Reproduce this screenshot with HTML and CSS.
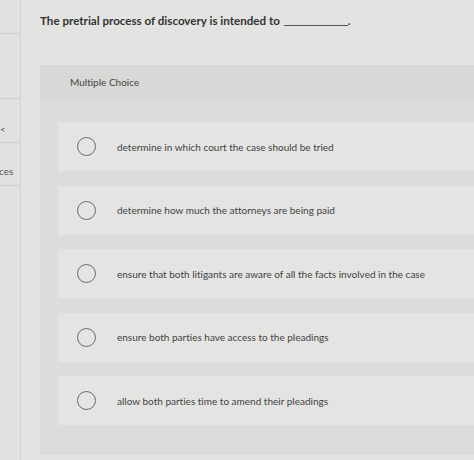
FILE: index.html
```html
<!DOCTYPE html>
<html>
<head>
<meta charset="utf-8">
<link rel="stylesheet" href="styles.css">
</head>
<body>
<div class="page">
  <aside class="sidebar">
    <div class="side-top"></div>
    <div class="side-box">
      <div class="side-item">&lt;</div>
      <div class="side-item">ces</div>
    </div>
  </aside>
  <main class="main">
    <h1 class="question">The pretrial process of discovery is intended to <span class="blank"></span>.</h1>
    <section class="panel">
      <div class="panel-head">Multiple Choice</div>
      <div class="options">
        <div class="option"><span class="radio"></span><span class="label">determine in which court the case should be tried</span></div>
        <div class="option"><span class="radio"></span><span class="label">determine how much the attorneys are being paid</span></div>
        <div class="option"><span class="radio"></span><span class="label">ensure that both litigants are aware of all the facts involved in the case</span></div>
        <div class="option"><span class="radio"></span><span class="label">ensure both parties have access to the pleadings</span></div>
        <div class="option"><span class="radio"></span><span class="label">allow both parties time to amend their pleadings</span></div>
      </div>
    </section>
  </main>
</div>
</body>
</html>
```
FILE: styles.css
```css
html, body {
  margin: 0;
  padding: 0;
}
body {
  background: #e3e3e1;
  font-family: Lato, "Liberation Sans", sans-serif;
  font-variant-ligatures: none;
  color: #3a3a3a;
  width: 474px;
  height: 460px;
  overflow: hidden;
}
.page {
  display: flex;
  height: 460px;
}
.sidebar {
  width: 20px;
  flex: none;
  display: flex;
  flex-direction: column;
  background: #e1e1df;
  border-right: 1px solid #d4d4d2;
}
.side-top {
  height: 33px;
  border-bottom: 1px solid #cfcfcd;
}
.side-box {
  margin-top: 64px;
  border-top: 1px solid #cfcfcd;
  border-bottom: 1px solid #cfcfcd;
  display: flex;
  flex-direction: column;
}
.side-item {
  font-size: 10px;
  color: #555;
  display: flex;
  align-items: center;
}
.side-item:first-child {
  padding-top: 16px;
  height: 27px;
  border-bottom: 1px solid #cfcfcd;
}
.side-item:last-child {
  margin-left: -1px;
  padding-top: 14px;
  height: 28px;
}
.main {
  flex: 1;
  padding-left: 19px;
  display: flex;
  flex-direction: column;
}
.question {
  margin: 12px 0 0;
  font-size: 11.6px;
  font-weight: 700;
  color: #333;
  height: 20px;
  line-height: 18px;
  white-space: nowrap;
}
.blank {
  display: inline-block;
  width: 64px;
  border-bottom: 1px solid #555;
  margin-left: 1px;
  vertical-align: -1px;
}
.panel {
  margin-top: 33px;
  margin-right: -20px;
  height: 390px;
  background: #dcdcda;
  display: flex;
  flex-direction: column;
}
.panel-head {
  height: 35px;
  background: #d8d8d6;
  padding-left: 30px;
  font-size: 10px;
  color: #444;
  line-height: 34px;
}
.options {
  padding: 22px 0 0 18px;
  display: flex;
  flex-direction: column;
  gap: 14.5px;
}
.option {
  height: 49px;
  background: #e4e4e2;
  display: flex;
  align-items: center;
}
.radio {
  width: 17px;
  height: 17px;
  border: 1.3px solid #6a6a6a;
  border-radius: 50%;
  margin-left: 19px;
  flex: none;
}
.label {
  margin-left: 21px;
  font-size: 10px;
  color: #424242;
  white-space: nowrap;
}
```
